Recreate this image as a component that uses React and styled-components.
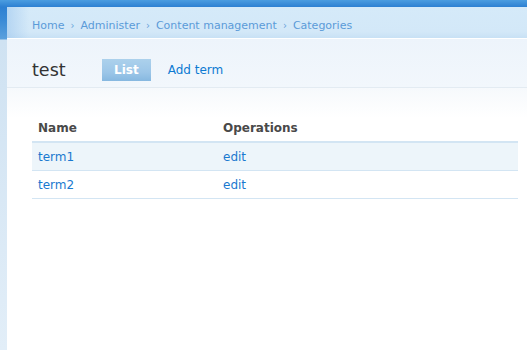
import React from "react";
import styled, { createGlobalStyle } from "styled-components";

const Global = createGlobalStyle`
  html, body { margin: 0; padding: 0; background: #fff; }
  body { font-family: "DejaVu Sans", Verdana, sans-serif; }
  #root { min-height: 350px; }
`;

const Page = styled.div`
  display: grid;
  grid-template-columns: 7px 1fr;
  grid-template-rows: 7px 32px 1fr;
  min-height: 350px;
  background: linear-gradient(180deg, #4b9de0 0px, #2d80d2 7px, #3a8ad6 20px, #5aa0dd 39px, #cfe2f2 40px, #e2eef8 350px);
`;

const TopBar = styled.div`
  grid-column: 1 / 3;
`;

const Breadcrumb = styled.nav`
  grid-column: 2;
  display: flex;
  align-items: center;
  padding-left: 25px;
  padding-top: 5px;
  font-size: 11px;
  color: #5b9bd8;
  background:
    linear-gradient(90deg, rgba(160, 200, 238, 0.6) 0px, rgba(160, 200, 238, 0) 22px),
    linear-gradient(180deg, #d5eaf9 0%, #d3e8f8 80%, #c8e1f5 100%);
  border-bottom: 1px solid #fff;
  box-sizing: border-box;
`;

const Crumb = styled.a`
  color: #5b9bd8;
  text-decoration: none;
`;

const Sep = styled.span`
  margin: 0 6px;
  color: #6aa3d9;
  font-size: 10px;
`;

const Main = styled.main`
  grid-column: 2;
  background: #fff;
  display: flex;
  flex-direction: column;
  box-shadow: inset 1px 0 0 #cfe0ee;
`;

const Header = styled.div`
  height: 49px;
  display: flex;
  align-items: flex-end;
  padding: 0 25px 6px;
  box-sizing: border-box;
  background: linear-gradient(180deg, #edf4fb 0%, #f2f7fc 100%);
  border-bottom: 1px solid #e3ebf2;
`;

const Title = styled.h1`
  margin: 0 0 0 0;
  font-family: "DejaVu Sans", Verdana, sans-serif;
  font-weight: normal;
  font-size: 17.5px;
  line-height: 22px;
  color: #333;
  width: 70px;
`;

const Tab = styled.a`
  display: inline-flex;
  align-items: center;
  justify-content: center;
  height: 22px;
  padding: 0 ${(p) => (p.$active ? "12px" : "5px")};
  margin-right: 12px;
  font-size: 12px;
  font-weight: ${(p) => (p.$active ? "bold" : "normal")};
  color: ${(p) => (p.$active ? "#fff" : "#0d7ad2")};
  background: ${(p) =>
    p.$active ? "linear-gradient(180deg, #acd1ec 0%, #9cc6e8 60%, #86b8e0 100%)" : "transparent"};
  text-decoration: none;
`;

const Content = styled.div`
  padding: 31px 9px 0 25px;
  background: linear-gradient(180deg, #f6f9fc 0px, #ffffff 30px);
  flex: 1;
`;

const Table = styled.table`
  width: 100%;
  border-collapse: collapse;
  font-size: 12px;
`;

const Th = styled.th`
  text-align: left;
  font-weight: bold;
  color: #494949;
  padding: 2px 6px 6px;
  height: 14px;
  border-bottom: 2px solid #d3e5f3;
  width: ${(p) => p.$w || "auto"};
`;

const Tr = styled.tr`
  background: ${(p) => (p.$odd ? "#edf5fa" : "#fff")};
  border-bottom: 1px solid #d3e5f3;
`;

const Td = styled.td`
  padding: 0 6px;
  height: 27px;
`;

const Link = styled.a`
  color: #1a79cf;
  text-decoration: none;
`;

const crumbs = ["Home", "Administer", "Content management", "Categories"];
const rows = ["term1", "term2"];

export default function App() {
  return (
    <>
      <Global />
      <Page>
        <TopBar />
        <Breadcrumb>
          {crumbs.map((c, i) => (
            <React.Fragment key={c}>
              {i > 0 && <Sep>›</Sep>}
              <Crumb href="#">{c}</Crumb>
            </React.Fragment>
          ))}
        </Breadcrumb>
        <Main>
          <Header>
            <Title>test</Title>
            <Tab $active href="#">List</Tab>
            <Tab href="#">Add term</Tab>
          </Header>
          <Content>
            <Table>
              <thead>
                <tr>
                  <Th $w="173px">Name</Th>
                  <Th>Operations</Th>
                </tr>
              </thead>
              <tbody>
                {rows.map((r, i) => (
                  <Tr key={r} $odd={i % 2 === 0}>
                    <Td><Link href="#">{r}</Link></Td>
                    <Td><Link href="#">edit</Link></Td>
                  </Tr>
                ))}
              </tbody>
            </Table>
          </Content>
        </Main>
      </Page>
    </>
  );
}
